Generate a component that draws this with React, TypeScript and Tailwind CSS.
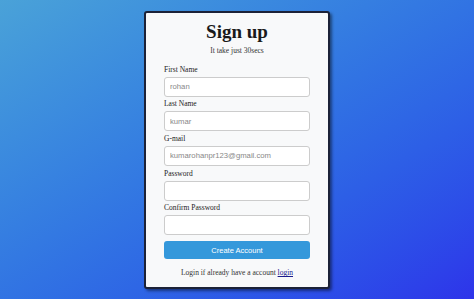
import React from "react";

const fields = [
  { label: "First Name", placeholder: "rohan", type: "text" },
  { label: "Last Name", placeholder: "kumar", type: "text" },
  { label: "G-mail", placeholder: "kumarohanpr123@gmail.com", type: "email" },
  { label: "Password", placeholder: "", type: "password" },
  { label: "Confirm Password", placeholder: "", type: "password" },
];

export default function App() {
  return (
    <div className="w-[474px] h-[299px] flex items-center justify-center bg-linear-to-br from-[#4aa2d8] to-[#2e33ea]">
      <div className="w-[186px] h-[278px] bg-[#f8f9fa] border-2 border-[#1c2238] rounded-[3px] shadow-[2px_2px_3px_rgba(0,0,0,0.45)] px-[18px] pt-[8px] flex flex-col font-['Liberation_Serif',serif] text-[#222]">
        <h1 className="text-[19px] leading-[22px] font-bold text-center text-[#1a1a1a]">Sign up</h1>
        <p className="text-[7.5px] leading-[10px] text-center mt-[3px] text-[#333]">It take just 30secs</p>
        <div className="flex flex-col mt-[9px] gap-[2.7px]">
          {fields.map((f) => (
            <div key={f.label} className="flex flex-col">
              <label className="text-[7.5px] leading-[10px] mb-[2px]">{f.label}</label>
              <input
                type={f.type}
                placeholder={f.placeholder}
                className="h-[20px] w-full bg-white border border-[#ccc] rounded-[3px] px-[5px] text-[7.7px] font-['Liberation_Sans',sans-serif] placeholder:text-[#888] outline-none"
              />
            </div>
          ))}
        </div>
        <button className="mt-[6px] h-[18px] w-full rounded-[3px] bg-[#3498db] text-white text-[7.5px] font-['Liberation_Sans',sans-serif]">
          Create Account
        </button>
        <p className="text-[7.5px] leading-[10px] text-center mt-[9px] text-[#333]">
          Login if already have a account <a className="underline text-[#1a1a8c]">login</a>
        </p>
      </div>
    </div>
  );
}
